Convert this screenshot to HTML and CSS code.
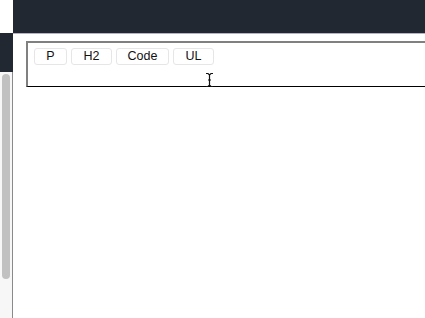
FILE: index.html
```html
<!DOCTYPE html>
<html>
<head>
<meta charset="utf-8">
<link rel="stylesheet" href="styles.css">
</head>
<body>
<div class="app">
  <div class="side">
    <div class="side-blank"></div>
    <div class="side-dark"></div>
    <div class="track"><div class="thumb"></div></div>
  </div>
  <div class="main">
    <div class="topbar"></div>
    <div class="content">
      <div class="editor">
        <div class="toolbar">
          <button class="btn btn-p">P</button>
          <button class="btn btn-h2">H2</button>
          <button class="btn btn-code">Code</button>
          <button class="btn btn-ul">UL</button>
        </div>
      </div>
    </div>
  </div>
  <svg class="cursor" width="9" height="16" viewBox="0 0 9 16">
    <path d="M1 1.5 h2 l1.5 1.5 l1.5 -1.5 h2 M4.5 3 v10 M1 14.5 h2 l1.5 -1.5 l1.5 1.5 h2 M3 8 h3" stroke="#111" stroke-width="1.2" fill="none"/>
  </svg>
</div>
</body>
</html>
```
FILE: styles.css
```css
html, body {
  margin: 0;
  padding: 0;
  background: #ffffff;
  font-family: "Liberation Sans", Arial, sans-serif;
}
.app {
  position: relative;
  display: grid;
  grid-template-columns: 13px 1fr;
  width: 425px;
  height: 318px;
  overflow: hidden;
}
.side {
  display: flex;
  flex-direction: column;
}
.side-blank {
  height: 33px;
  background: #ffffff;
}
.side-dark {
  height: 39px;
  background: #222832;
}
.track {
  flex: 1;
  background: #f7f7f7;
  border-right: 1px solid #8a8a8e;
  padding: 2px 2px 0 2px;
}
.thumb {
  width: 8px;
  height: 205px;
  background: #c1c1c1;
  border-radius: 4px;
}
.main {
  display: flex;
  flex-direction: column;
}
.topbar {
  height: 33px;
  background: #222832;
  border-bottom: 1px solid #b6b2c4;
}
.content {
  padding: 7px 0 0 13px;
}
.editor {
  border-top: 2px solid #808080;
  border-left: 2px solid #808080;
  border-bottom: 1px solid #000000;
  height: 43px;
  box-sizing: content-box;
}
.toolbar {
  display: flex;
  gap: 4px;
  padding: 5px 0 0 6px;
}
.btn {
  font-family: "Liberation Sans", Arial, sans-serif;
  font-size: 12.5px;
  color: #111;
  background: #ffffff;
  border: 1px solid #e6e6e6;
  border-radius: 3px;
  height: 17px;
  padding: 0;
  line-height: 15px;
  margin: 0;
  text-align: center;
}
.btn-p { width: 33px; }
.btn-h2 { width: 41px; }
.btn-code { width: 53px; }
.btn-ul { width: 41px; }
.cursor {
  position: absolute;
  left: 205px;
  top: 72px;
}
```
